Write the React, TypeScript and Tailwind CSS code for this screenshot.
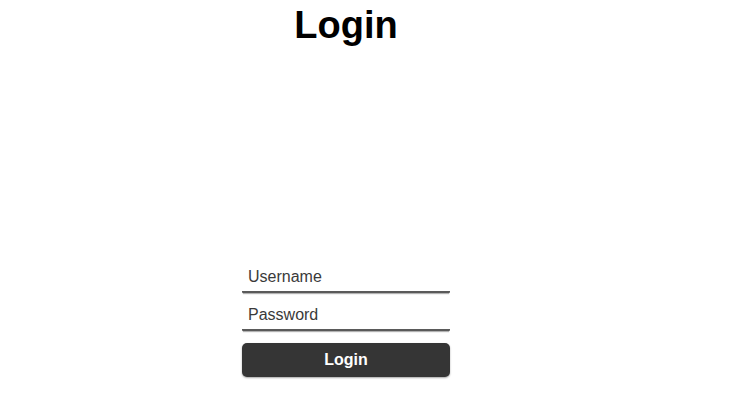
import React from 'react';

const font = { fontFamily: '"Liberation Sans", Arial, sans-serif' };

export default function App() {
    return (
        <div className="w-[750px] h-[415px] bg-white overflow-hidden" style={font}>
            <div className="w-[692px] flex flex-col items-center">
                {/* Title */}
                <h1 className="pt-[4px] text-[38px] leading-[42px] font-bold text-black">Login</h1>

                {/* Form */}
                <form className="mt-[217px] w-[208px] flex flex-col" onSubmit={e => e.preventDefault()}>
                    <input
                        type="text"
                        placeholder="Username"
                        className="h-[30px] px-[6px] text-[16px] text-[#333] placeholder:text-[#3a3a3a] border-b-2 border-[#5a5a5a] shadow-[0_2px_1px_-1px_rgba(0,0,0,0.3)] rounded-[1px] outline-none bg-white"
                    />
                    <input
                        type="password"
                        placeholder="Password"
                        className="mt-[8px] h-[30px] px-[6px] text-[16px] text-[#333] placeholder:text-[#3a3a3a] border-b-2 border-[#5a5a5a] shadow-[0_2px_1px_-1px_rgba(0,0,0,0.3)] rounded-[1px] outline-none bg-white"
                    />
                    <button
                        type="submit"
                        className="mt-[12px] h-[34px] rounded-[5px] bg-[#353535] text-white text-[16px] font-bold shadow-[0_1px_2px_rgba(0,0,0,0.35)]"
                    >
                        Login
                    </button>
                </form>
            </div>
        </div>
    );
}
